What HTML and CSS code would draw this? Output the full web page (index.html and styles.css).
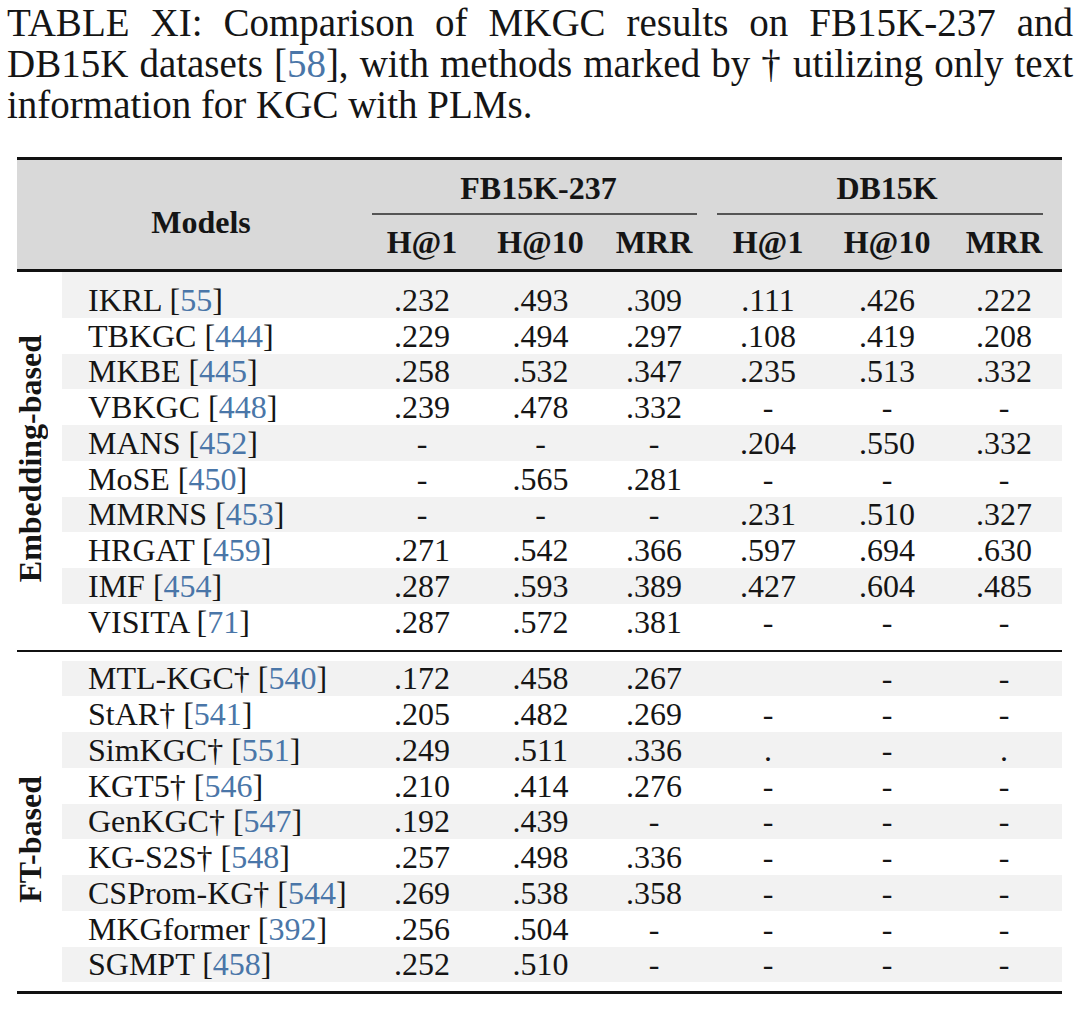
FILE: index.html
```html
<!DOCTYPE html>
<html>
<head>
<meta charset="utf-8">
<link rel="stylesheet" href="styles.css">
</head>
<body>
<div class="page">
  <p class="caption">
    <span class="cl j">TABLE XI: Comparison of MKGC results on FB15K-237 and</span>
    <span class="cl j">DB15K datasets [<span class="ref">58</span>], with methods marked by † utilizing only text</span>
    <span class="cl">information for KGC with PLMs.</span>
  </p>
  <table class="tbl">
    <colgroup>
      <col class="c-side"><col class="c-name"><col class="c-a"><col class="c-b"><col class="c-c"><col class="c-d"><col class="c-e"><col class="c-f">
    </colgroup>
    <thead>
      <tr class="hr1">
        <th class="models" colspan="2" rowspan="2">Models</th>
        <th class="grp" colspan="3"><div class="grp-in fb"><span class="gt">FB15K-237</span></div></th>
        <th class="grp" colspan="3"><div class="grp-in db"><span class="gt">DB15K</span></div></th>
      </tr>
      <tr class="hr2">
        <th>H@1</th><th>H@10</th><th>MRR</th><th>H@1</th><th>H@10</th><th>MRR</th>
      </tr>
    </thead>
    <tbody class="sec">
      <tr class="row odd first"><td class="side side-emb" rowspan="10"><div class="side-in">Embedding-based</div></td><td class="name">IKRL [<span class="ref">55</span>]</td><td>.232</td><td>.493</td><td>.309</td><td>.111</td><td>.426</td><td>.222</td></tr>
      <tr class="row"><td class="name">TBKGC [<span class="ref">444</span>]</td><td>.229</td><td>.494</td><td>.297</td><td>.108</td><td>.419</td><td>.208</td></tr>
      <tr class="row odd"><td class="name">MKBE [<span class="ref">445</span>]</td><td>.258</td><td>.532</td><td>.347</td><td>.235</td><td>.513</td><td>.332</td></tr>
      <tr class="row"><td class="name">VBKGC [<span class="ref">448</span>]</td><td>.239</td><td>.478</td><td>.332</td><td>-</td><td>-</td><td>-</td></tr>
      <tr class="row odd"><td class="name">MANS [<span class="ref">452</span>]</td><td>-</td><td>-</td><td>-</td><td>.204</td><td>.550</td><td>.332</td></tr>
      <tr class="row"><td class="name">MoSE [<span class="ref">450</span>]</td><td>-</td><td>.565</td><td>.281</td><td>-</td><td>-</td><td>-</td></tr>
      <tr class="row odd"><td class="name">MMRNS [<span class="ref">453</span>]</td><td>-</td><td>-</td><td>-</td><td>.231</td><td>.510</td><td>.327</td></tr>
      <tr class="row"><td class="name">HRGAT [<span class="ref">459</span>]</td><td>.271</td><td>.542</td><td>.366</td><td>.597</td><td>.694</td><td>.630</td></tr>
      <tr class="row odd"><td class="name">IMF [<span class="ref">454</span>]</td><td>.287</td><td>.593</td><td>.389</td><td>.427</td><td>.604</td><td>.485</td></tr>
      <tr class="row"><td class="name">VISITA [<span class="ref">71</span>]</td><td>.287</td><td>.572</td><td>.381</td><td>-</td><td>-</td><td>-</td></tr>
    </tbody>
    <tbody>
      <tr class="mid"><td colspan="8"></td></tr>
      <tr class="gap"><td colspan="8"></td></tr>
    </tbody>
    <tbody class="sec">
      <tr class="row odd"><td class="side side-ft" rowspan="9"><div class="side-in">FT-based</div></td><td class="name">MTL-KGC† [<span class="ref">540</span>]</td><td>.172</td><td>.458</td><td>.267</td><td></td><td>-</td><td>-</td></tr>
      <tr class="row"><td class="name">StAR† [<span class="ref">541</span>]</td><td>.205</td><td>.482</td><td>.269</td><td>-</td><td>-</td><td>-</td></tr>
      <tr class="row odd"><td class="name">SimKGC† [<span class="ref">551</span>]</td><td>.249</td><td>.511</td><td>.336</td><td>.</td><td>-</td><td>.</td></tr>
      <tr class="row"><td class="name">KGT5† [<span class="ref">546</span>]</td><td>.210</td><td>.414</td><td>.276</td><td>-</td><td>-</td><td>-</td></tr>
      <tr class="row odd"><td class="name">GenKGC† [<span class="ref">547</span>]</td><td>.192</td><td>.439</td><td>-</td><td>-</td><td>-</td><td>-</td></tr>
      <tr class="row"><td class="name">KG-S2S† [<span class="ref">548</span>]</td><td>.257</td><td>.498</td><td>.336</td><td>-</td><td>-</td><td>-</td></tr>
      <tr class="row odd"><td class="name">CSProm-KG† [<span class="ref">544</span>]</td><td>.269</td><td>.538</td><td>.358</td><td>-</td><td>-</td><td>-</td></tr>
      <tr class="row"><td class="name">MKGformer [<span class="ref">392</span>]</td><td>.256</td><td>.504</td><td>-</td><td>-</td><td>-</td><td>-</td></tr>
      <tr class="row odd last"><td class="name">SGMPT [<span class="ref">458</span>]</td><td>.252</td><td>.510</td><td>-</td><td>-</td><td>-</td><td>-</td></tr>
    </tbody>
    <tbody>
      <tr class="end"><td colspan="8"></td></tr>
    </tbody>
  </table>
</div>
</body>
</html>
```

FILE: styles.css
```css
html, body {
  margin: 0;
  padding: 0;
  background: #ffffff;
}
body {
  font-family: "Liberation Serif", "Times New Roman", serif;
  color: #151515;
}
.page {
  width: 1080px;
}
.caption {
  margin: 2px 7px 0 7px;
  font-size: 39px;
  line-height: 41px;
}
.cl {
  display: block;
  white-space: nowrap;
}
.cl.j {
  text-align: justify;
  text-align-last: justify;
}
.ref {
  color: #4a76a8;
}
.tbl {
  margin: 32px 0 0 17px;
  width: 1045px;
  table-layout: fixed;
  border-collapse: separate;
  border-spacing: 0;
  border-top: 3px solid #111;
  border-bottom: 3px solid #111;
  font-size: 32px;
}
.c-side { width: 45px; }
.c-name { width: 301px; }
.c-a { width: 118px; }
.c-b { width: 119px; }
.c-c { width: 108px; }
.c-d { width: 120px; }
.c-e { width: 118px; }
.c-f { width: 116px; }

.tbl th {
  background: #d9d9d9;
  font-weight: bold;
  padding: 0;
  text-align: center;
  line-height: 32px;
}
.tbl th.models {
  border-bottom: 3px solid #111;
  padding: 15px 0 0 22px;
  vertical-align: middle;
}
.tbl th.grp {
  vertical-align: top;
}
.grp-in {
  height: 53px;
  line-height: 56px;
  border-bottom: 2px solid #555;
}
.grp-in.fb {
  margin: 0 11px 0 9px;
  padding-left: 8px;
}
.grp-in.db {
  margin: 0 19px 0 9px;
  padding-left: 14px;
}
.hr2 th {
  height: 54px;
  border-bottom: 3px solid #111;
  vertical-align: middle;
  line-height: 54px;
}

.tbl td {
  padding: 0;
  text-align: center;
  vertical-align: middle;
  line-height: 30px;
  white-space: nowrap;
}
.row {
  height: 35.75px;
}
.row.first {
  height: 45.75px;
}
.row.first td {
  padding-top: 10px;
}
.row.odd td {
  background: #f2f2f2;
}
.tbl td.name {
  text-align: left;
  padding-left: 26px;
}
.tbl td.side {
  background: #ffffff;
  text-align: left;
  vertical-align: middle;
}
.row.odd td.side {
  background: #ffffff;
}
.tbl td.side-emb {
  padding-top: 10px;
}
.row.first td.side-emb {
  padding-top: 10px;
}
.tbl td.side-ft {
  padding-top: 40px;
}
.side-in {
  display: inline-block;
  writing-mode: vertical-rl;
  transform: rotate(180deg);
  font-weight: bold;
  line-height: 26px;
  white-space: nowrap;
}
.mid {
  height: 12px;
}
.mid td {
  border-bottom: 2px solid #111;
  line-height: 0;
  font-size: 0;
}
.gap {
  height: 9px;
}
.gap td, .end td {
  line-height: 0;
  font-size: 0;
}
.end {
  height: 9px;
}
```
